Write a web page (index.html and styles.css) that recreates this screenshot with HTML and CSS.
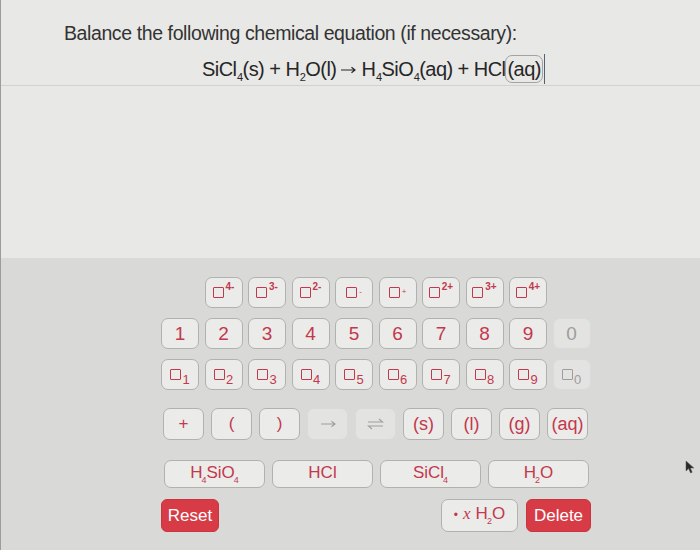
FILE: index.html
```html
<!DOCTYPE html>
<html>
<head>
<meta charset="utf-8">
<link rel="stylesheet" href="styles.css">
</head>
<body>
<div class="page">
  <div class="question">
    <p class="title">Balance the following chemical equation (if necessary):</p>
    <div class="equation">SiCl<span class="sub">4</span>(s) + H<span class="sub">2</span>O(l)<svg class="arrow" width="15" height="8" viewBox="0 0 15 8"><path d="M0 4 H13.5 M10.5 1.2 L14 4 L10.5 6.8" fill="none" stroke="#262626" stroke-width="1.2"/></svg>H<span class="sub">4</span>SiO<span class="sub">4</span>(aq) + HCl<span class="boxed">(aq)</span><span class="caret"></span></div>
    <div class="divider"></div>
  </div>
  <div class="keypad">
    <div class="grid10">
      <div class="key k1"><span class="sq"></span><span class="chg">4-</span></div>
      <div class="key"><span class="sq"></span><span class="chg">3-</span></div>
      <div class="key"><span class="sq"></span><span class="chg">2-</span></div>
      <div class="key"><span class="sq"></span><span class="chg small">-</span></div>
      <div class="key"><span class="sq"></span><span class="chg small">+</span></div>
      <div class="key"><span class="sq"></span><span class="chg">2+</span></div>
      <div class="key"><span class="sq"></span><span class="chg">3+</span></div>
      <div class="key"><span class="sq"></span><span class="chg">4+</span></div>

      <div class="key num first">1</div>
      <div class="key num">2</div>
      <div class="key num">3</div>
      <div class="key num">4</div>
      <div class="key num">5</div>
      <div class="key num">6</div>
      <div class="key num">7</div>
      <div class="key num">8</div>
      <div class="key num">9</div>
      <div class="key num off">0</div>

      <div class="key first"><span class="sq"></span><span class="sb">1</span></div>
      <div class="key"><span class="sq"></span><span class="sb">2</span></div>
      <div class="key"><span class="sq"></span><span class="sb">3</span></div>
      <div class="key"><span class="sq"></span><span class="sb">4</span></div>
      <div class="key"><span class="sq"></span><span class="sb">5</span></div>
      <div class="key"><span class="sq"></span><span class="sb">6</span></div>
      <div class="key"><span class="sq"></span><span class="sb">7</span></div>
      <div class="key"><span class="sq"></span><span class="sb">8</span></div>
      <div class="key"><span class="sq"></span><span class="sb">9</span></div>
      <div class="key off"><span class="sq"></span><span class="sb">0</span></div>
    </div>

    <div class="grid9">
      <div class="key sym">+</div>
      <div class="key sym">(</div>
      <div class="key sym">)</div>
      <div class="key sym off"><svg width="16" height="8" viewBox="0 0 16 8"><path d="M1 4 H14.5 M11.5 1.2 L15 4 L11.5 6.8" fill="none" stroke="#a0a0a0" stroke-width="1.1"/></svg></div>
      <div class="key sym off"><svg width="17" height="12" viewBox="0 0 17 12"><path d="M1 4 H15.5 L12 1 M16 8 H1.5 L5 11" fill="none" stroke="#a0a0a0" stroke-width="1.1"/></svg></div>
      <div class="key state">(s)</div>
      <div class="key state">(l)</div>
      <div class="key state">(g)</div>
      <div class="key state">(aq)</div>
    </div>

    <div class="grid4">
      <div class="key cmp">H<span class="csub">4</span>SiO<span class="csub">4</span></div>
      <div class="key cmp">HCl</div>
      <div class="key cmp">SiCl<span class="csub">4</span></div>
      <div class="key cmp">H<span class="csub">2</span>O</div>
    </div>

    <div class="actions">
      <div class="key danger reset">Reset</div>
      <div class="right">
        <div class="key hydrate"><span class="dot">•</span><span class="xv">x</span>H<span class="csub">2</span>O</div>
        <div class="key danger del">Delete</div>
      </div>
    </div>
  </div>
  <svg class="pointer" width="10" height="14" viewBox="0 0 10 14"><path d="M1 1 L1 11 L3.6 8.6 L5.6 13 L7.2 12.3 L5.3 8 L8.8 8 Z" fill="#2a2a2a" stroke="#555" stroke-width="0.5"/></svg>
</div>
</body>
</html>
```
FILE: styles.css
```css
html, body {
  margin: 0;
  padding: 0;
}
body {
  width: 700px;
  height: 550px;
  overflow: hidden;
  font-family: "Liberation Sans", Arial, sans-serif;
}
.page {
  position: relative;
  width: 700px;
  height: 550px;
  border-left: 1px solid #9c9c9c;
  box-sizing: border-box;
}
.question {
  height: 258px;
  box-sizing: border-box;
  padding-top: 21px;
  background: #e8e8e6;
}
.title {
  margin: 0 0 0 63px;
  font-size: 19.5px;
  letter-spacing: -0.4px;
  line-height: 24px;
  color: #333;
}
.equation {
  margin-top: 9px;
  padding-left: 201px;
  font-size: 20px;
  letter-spacing: -0.55px;
  line-height: 30px;
  height: 30px;
  color: #262626;
  display: flex;
  align-items: baseline;
  white-space: pre;
}
.sub {
  font-size: 11px;
  position: relative;
  top: 5px;
  margin: 0 0 0 0.5px;
}
.arrow {
  align-self: center;
  margin: 1px 5px 0 5px;
}
.boxed {
  border: 1px solid #a3a3a3;
  border-radius: 7px;
  padding: 0 1px;
  line-height: 26px;
}
.caret {
  display: inline-block;
  width: 1px;
  height: 30px;
  background: #556070;
  margin-left: 1px;
  align-self: center;
}
.divider {
  margin-top: 1px;
  height: 1px;
  background: #d2d2d0;
}
.keypad {
  height: 292px;
  box-sizing: border-box;
  padding: 19px 0 0 160px;
  background: #d9dad8;
}
.key {
  box-sizing: border-box;
  border: 1px solid #b1b1af;
  border-radius: 7px;
  background: #ebebe9;
  color: #c3384d;
  display: flex;
  align-items: center;
  justify-content: center;
  height: 31px;
}
.key.off {
  background: #e3e3e1;
  border-color: #dadad8;
  color: #9d9d9d;
}
.grid10 {
  display: grid;
  grid-template-columns: repeat(10, 38px);
  column-gap: 5.5px;
  row-gap: 10px;
  width: 430px;
}
.k1 {
  grid-column-start: 2;
}
.first {
  grid-column-start: 1;
}
.sq {
  display: inline-block;
  width: 9px;
  height: 9px;
  border: 1.2px solid currentColor;
  border-radius: 1px;
}
.chg {
  font-size: 10px;
  font-weight: bold;
  margin-left: 2px;
  position: relative;
  top: -6px;
}
.chg.small {
  font-size: 8px;
  top: -1px;
  font-weight: normal;
}
.sb {
  font-size: 13px;
  margin-left: 1px;
  position: relative;
  top: 5px;
}
.num {
  font-size: 19px;
}
.grid9 {
  margin-top: 18px;
  display: grid;
  grid-template-columns: repeat(9, 41px);
  column-gap: 7px;
  margin-left: 2px;
}
.grid9 .key {
  height: 32px;
}
.sym {
  font-size: 17px;
}
.state {
  font-size: 18px;
}
.grid4 {
  margin-top: 20px;
  display: grid;
  grid-template-columns: repeat(4, 101px);
  column-gap: 7px;
  margin-left: 3px;
}
.grid4 .key {
  height: 28px;
}
.cmp {
  font-size: 17px;
  align-items: baseline;
  padding-top: 2px;
}
.csub {
  font-size: 9px;
  position: relative;
  top: 5px;
  margin-left: -1px;
}
.actions {
  margin-top: 11px;
  width: 430px;
  display: flex;
  justify-content: space-between;
}
.actions .key {
  height: 33px;
}
.right {
  display: flex;
  gap: 8px;
}
.danger {
  background: #d73c46;
  border-color: #c8353f;
  color: #fff;
  font-size: 17px;
  border-radius: 6px;
}
.reset {
  width: 58px;
}
.del {
  width: 65px;
}
.hydrate {
  width: 77px;
  font-size: 17px;
  align-items: baseline;
  padding-top: 4px;
}
.dot {
  font-size: 12px;
  margin-right: 5px;
}
.xv {
  font-family: "Liberation Serif", "Times New Roman", serif;
  font-style: italic;
  margin-right: 5px;
}
.pointer {
  position: absolute;
  left: 684px;
  top: 460px;
}
```
